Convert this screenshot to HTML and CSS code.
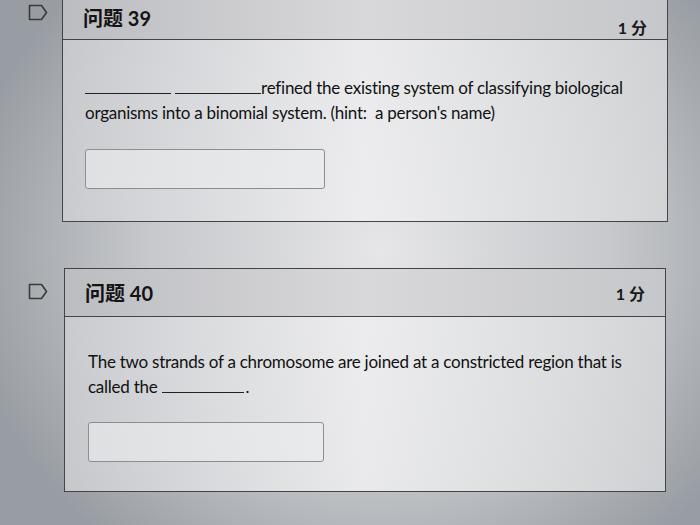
FILE: index.html
```html
<!DOCTYPE html>
<html>
<head>
<meta charset="utf-8">
<link rel="stylesheet" href="styles.css">
</head>
<body>
<div class="page">
  <div class="question q1">
    <div class="flag-col">
      <svg class="flag" width="20" height="17" viewBox="0 0 20 17"><path d="M1.5 1.5 H13.5 L18.5 8.5 L13.5 15.5 H1.5 Z" fill="none" stroke="#3a3a3a" stroke-width="1.6" stroke-linejoin="round"/></svg>
    </div>
    <div class="card">
      <div class="card-head">
        <span class="title">问题 39</span>
        <span class="pts">1 分</span>
      </div>
      <div class="card-body">
        <p class="text"><span class="blank b1"></span> <span class="blank b2"></span>refined the existing system of classifying biological organisms into a binomial system. (hint:&nbsp; a person's name)</p>
        <div class="answer"></div>
      </div>
    </div>
  </div>
  <div class="question q2">
    <div class="flag-col">
      <svg class="flag" width="20" height="17" viewBox="0 0 20 17"><path d="M1.5 1.5 H13.5 L18.5 8.5 L13.5 15.5 H1.5 Z" fill="none" stroke="#3a3a3a" stroke-width="1.6" stroke-linejoin="round"/></svg>
    </div>
    <div class="card">
      <div class="card-head">
        <span class="title">问题 40</span>
        <span class="pts">1 分</span>
      </div>
      <div class="card-body">
        <p class="text"><span>The two strands of a chromosome are joined at a constricted region that is</span> <span>called the</span> <span class="blank b3"></span><span>.</span></p>
        <div class="answer"></div>
      </div>
    </div>
  </div>
</div>
</body>
</html>
```
FILE: styles.css
```css
html, body {
  margin: 0;
  padding: 0;
}
body {
  width: 700px;
  height: 525px;
  overflow: hidden;
  font-family: Lato, "Noto Sans CJK SC", sans-serif;
  color: #111;
  background: radial-gradient(ellipse 420px 380px at 380px 250px, #e6e6e8 0%, #c6c8cb 55%, #989da3 100%);
}
.page {
  display: flex;
  flex-direction: column;
  gap: 46px;
  margin-top: -8px;
}
.question {
  display: flex;
}
.flag-col {
  width: 62px;
  display: flex;
  justify-content: center;
  padding-left: 14px;
  box-sizing: border-box;
}
.q1 .flag-col { padding-top: 12px; }
.q2 .flag-col { padding-top: 15px; }
.card {
  width: 606px;
  border: 1.5px solid #444446;
  box-sizing: border-box;
  background: linear-gradient(90deg, rgba(205,207,210,0.85) 0%, rgba(238,238,240,0.9) 50%, rgba(214,216,218,0.85) 100%);
}
.q2 .card { width: 602px; margin-left: 2px; }
.card-head {
  height: 47px;
  display: flex;
  align-items: center;
  justify-content: space-between;
  padding: 0 20px 0 20px;
  border-bottom: 1.5px solid #444446;
  background: linear-gradient(90deg, #bcbdc1 0%, #d8d8da 50%, #c6c7ca 100%);
}
.q1 .card-head { align-items: flex-start; padding-top: 10px; box-sizing: border-box; }
.q1 .pts { margin-top: 12px; }
.title {
  font-weight: 700;
  font-size: 20px;
  color: #141414;
}
.pts {
  font-weight: 700;
  font-size: 16px;
  color: #1a1a1a;
}
.card-body {
  padding: 35px 22px 32px 22px;
}
.q2 .card-body { padding: 32px 23px 29px 23px; }
.text {
  margin: 0;
  font-size: 17px;
  line-height: 25px;
  width: 552px;
  letter-spacing: -0.25px;
}
.q2 .text { width: 545px; }
.blank {
  display: inline-block;
  border-bottom: 1.5px solid #222;
  height: 12px;
  vertical-align: baseline;
}
.b1 { width: 86px; }
.b2 { width: 86px; }
.b3 { width: 82px; margin-right: 2px; }
.answer {
  margin-top: 24px;
  width: 238px;
  height: 38px;
  border: 1.5px solid #8c8e92;
  border-radius: 3px;
  background: rgba(235,236,238,0.6);
}
.q2 .answer { margin-top: 23px; width: 234px; }
```
